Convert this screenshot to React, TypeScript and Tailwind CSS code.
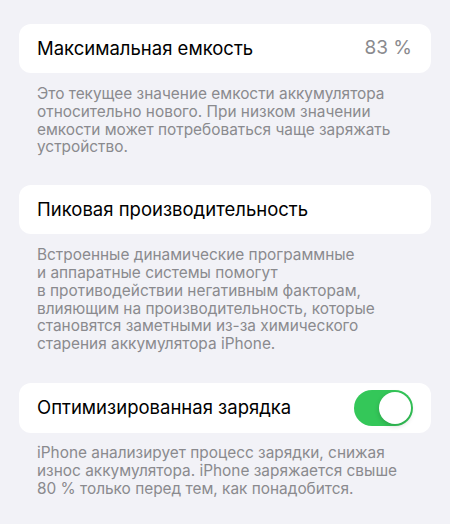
import React from "react";

const font = { fontFamily: "Inter, 'Noto Sans', sans-serif" };

function Footer({ lines }: { lines: string[] }) {
  return (
    <div className="mt-[12px] px-[37px] text-[15.4px] leading-[17.8px] text-[#8a8a8e]">
      {lines.map((l, i) => (
        <div key={i} className="whitespace-nowrap">{l}</div>
      ))}
    </div>
  );
}

function Toggle() {
  return (
    <div className="flex h-[36px] w-[59px] items-center rounded-full bg-[#34c759] px-[2px] justify-end">
      <div className="h-[32px] w-[32px] rounded-full bg-white shadow-[0_2px_5px_rgba(0,0,0,0.18)]" />
    </div>
  );
}

export default function App() {
  return (
    <div className="min-h-[524px] w-[450px] bg-[#f2f2f7] pt-[24px]" style={font}>
      <div className="mx-[19px] flex h-[49px] items-center justify-between rounded-[12px] bg-white pl-[18px] pr-[19px]">
        <span className="text-[18.5px] text-black">Максимальная емкость</span>
        <span className="text-[19px] text-[#8a8a8e]">83 %</span>
      </div>
      <Footer
        lines={[
          "Это текущее значение емкости аккумулятора",
          "относительно нового. При низком значении",
          "емкости может потребоваться чаще заряжать",
          "устройство.",
        ]}
      />

      <div className="mx-[19px] mt-[29px] flex h-[49px] items-center rounded-[12px] bg-white pl-[18px]">
        <span className="text-[18.5px] text-black">Пиковая производительность</span>
      </div>
      <Footer
        lines={[
          "Встроенные динамические программные",
          "и аппаратные системы помогут",
          "в противодействии негативным факторам,",
          "влияющим на производительность, которые",
          "становятся заметными из-за химического",
          "старения аккумулятора iPhone.",
        ]}
      />

      <div className="mx-[19px] mt-[30px] flex h-[50px] items-center justify-between rounded-[12px] bg-white pl-[18px] pr-[18px]">
        <span className="text-[18.5px] text-black">Оптимизированная зарядка</span>
        <Toggle />
      </div>
      <div className="-mt-px">
        <Footer
          lines={[
            "iPhone анализирует процесс зарядки, снижая",
            "износ аккумулятора. iPhone заряжается свыше",
            "80 % только перед тем, как понадобится.",
          ]}
        />
      </div>
    </div>
  );
}
